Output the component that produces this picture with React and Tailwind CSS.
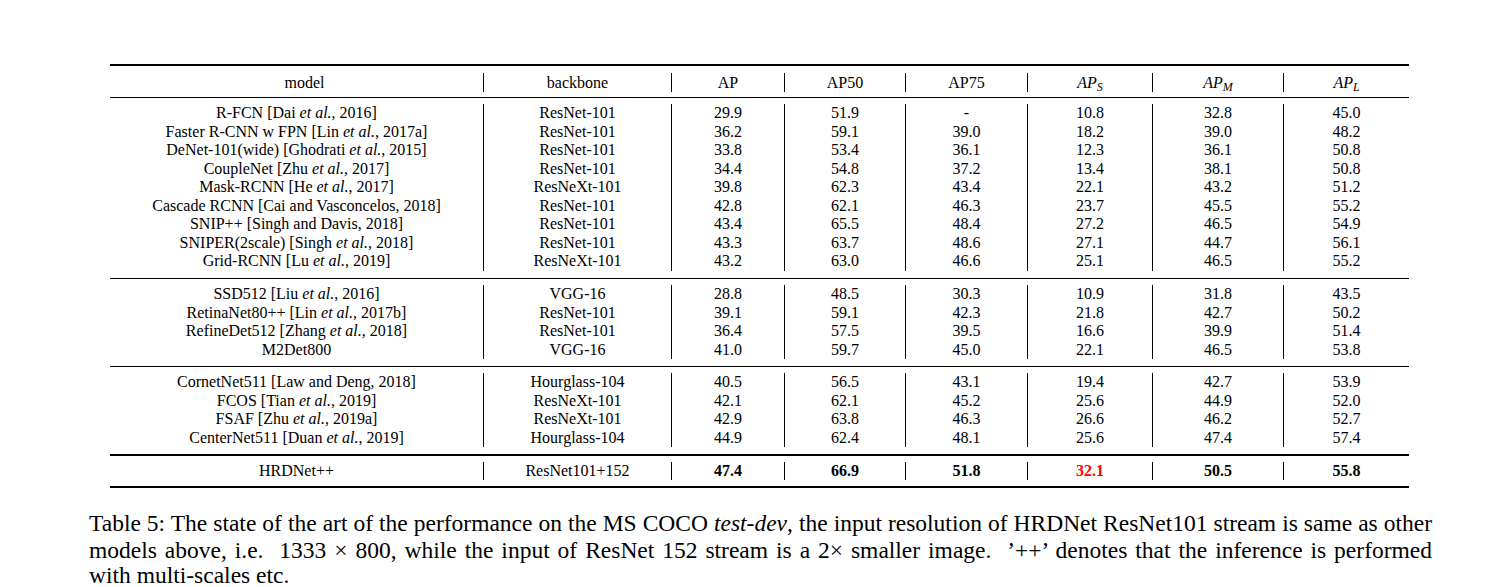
import React from 'react'

const grid = 'grid grid-cols-[373px_188px_113px_121px_122px_125px_131px_126px]'

const blocks = [
  [
    ['R-FCN [Dai et al., 2016]', 'ResNet-101', '29.9', '51.9', '-', '10.8', '32.8', '45.0'],
    ['Faster R-CNN w FPN [Lin et al., 2017a]', 'ResNet-101', '36.2', '59.1', '39.0', '18.2', '39.0', '48.2'],
    ['DeNet-101(wide) [Ghodrati et al., 2015]', 'ResNet-101', '33.8', '53.4', '36.1', '12.3', '36.1', '50.8'],
    ['CoupleNet [Zhu et al., 2017]', 'ResNet-101', '34.4', '54.8', '37.2', '13.4', '38.1', '50.8'],
    ['Mask-RCNN [He et al., 2017]', 'ResNeXt-101', '39.8', '62.3', '43.4', '22.1', '43.2', '51.2'],
    ['Cascade RCNN [Cai and Vasconcelos, 2018]', 'ResNet-101', '42.8', '62.1', '46.3', '23.7', '45.5', '55.2'],
    ['SNIP++ [Singh and Davis, 2018]', 'ResNet-101', '43.4', '65.5', '48.4', '27.2', '46.5', '54.9'],
    ['SNIPER(2scale) [Singh et al., 2018]', 'ResNet-101', '43.3', '63.7', '48.6', '27.1', '44.7', '56.1'],
    ['Grid-RCNN [Lu et al., 2019]', 'ResNeXt-101', '43.2', '63.0', '46.6', '25.1', '46.5', '55.2'],
  ],
  [
    ['SSD512 [Liu et al., 2016]', 'VGG-16', '28.8', '48.5', '30.3', '10.9', '31.8', '43.5'],
    ['RetinaNet80++ [Lin et al., 2017b]', 'ResNet-101', '39.1', '59.1', '42.3', '21.8', '42.7', '50.2'],
    ['RefineDet512 [Zhang et al., 2018]', 'ResNet-101', '36.4', '57.5', '39.5', '16.6', '39.9', '51.4'],
    ['M2Det800', 'VGG-16', '41.0', '59.7', '45.0', '22.1', '46.5', '53.8'],
  ],
  [
    ['CornetNet511 [Law and Deng, 2018]', 'Hourglass-104', '40.5', '56.5', '43.1', '19.4', '42.7', '53.9'],
    ['FCOS [Tian et al., 2019]', 'ResNeXt-101', '42.1', '62.1', '45.2', '25.6', '44.9', '52.0'],
    ['FSAF [Zhu et al., 2019a]', 'ResNeXt-101', '42.9', '63.8', '46.3', '26.6', '46.2', '52.7'],
    ['CenterNet511 [Duan et al., 2019]', 'Hourglass-104', '44.9', '62.4', '48.1', '25.6', '47.4', '57.4'],
  ],
]

const ours = ['HRDNet++', 'ResNet101+152', '47.4', '66.9', '51.8', '32.1', '50.5', '55.8']

// italicise "et al." inside citations
function Model({ text }) {
  const i = text.indexOf('et al.')
  if (i < 0) return text
  return (
    <>
      {text.slice(0, i)}
      <i>et al.</i>
      {text.slice(i + 6)}
    </>
  )
}

function MathAP({ sub }) {
  return (
    <span className="italic">
      AP<sub className="italic text-[12px]">{sub}</sub>
    </span>
  )
}

const header = [
  'model',
  'backbone',
  'AP',
  'AP50',
  'AP75',
  <MathAP sub="S" />,
  <MathAP sub="M" />,
  <MathAP sub="L" />,
]

function Block({ rows, pad, renderCell }) {
  return (
    <div className={`${grid} ${pad}`}>
      {header.map((_, c) => (
        <div key={c} className={c > 0 ? 'border-l border-black' : ''}>
          {rows.map((r, i) => (
            <div key={i} className="h-[18.5px] leading-[18.5px] text-center whitespace-nowrap">
              {renderCell(r, c)}
            </div>
          ))}
        </div>
      ))}
    </div>
  )
}

const modelCell = (r, c) => (c === 0 ? <Model text={r[0]} /> : r[c])

export default function App() {
  return (
    <div className="w-[1499px] h-[587px] overflow-hidden bg-white text-black font-['Liberation_Serif',serif]">
      <div className="pt-[64px] pl-[110px] w-[1409px] text-[16px]">
        <div className="h-[2px] bg-black" />
        <div className={`${grid} pt-[7px] pb-[5px]`}>
          {header.map((h, c) => (
            <div
              key={c}
              className={`h-[19px] leading-[19px] text-center ${c > 0 ? 'border-l border-black' : 'pl-[16px]'}`}
            >
              {h}
            </div>
          ))}
        </div>
        <div className="h-px bg-black" />
        <Block rows={blocks[0]} pad="pt-[6px] pb-[7.5px]" renderCell={modelCell} />
        <div className="h-px bg-black" />
        <Block rows={blocks[1]} pad="pt-[6px] pb-[7px]" renderCell={modelCell} />
        <div className="h-px bg-black" />
        <Block rows={blocks[2]} pad="pt-[6px] pb-[7px]" renderCell={modelCell} />
        <div className="h-[1.5px] bg-black" />
        <Block
          rows={[ours]}
          pad="pt-[6px] pb-[6px]"
          renderCell={(r, c) =>
            c < 2 ? r[c] : (
              <span className={`font-bold ${c === 5 ? 'text-[#ff0000]' : ''}`}>{r[c]}</span>
            )
          }
        />
        <div className="h-[2px] bg-black" />
      </div>

      {/* Caption */}
      <div className="mt-[22px] ml-[89px] w-[1343px] text-[23.5px] leading-[26.5px]">
        <div className="text-justify [text-align-last:justify] whitespace-nowrap">
          Table 5: The state of the art of the performance on the MS COCO <i>test-dev</i>, the input
          resolution of HRDNet ResNet101 stream is same as other
        </div>
        <div className="text-justify [text-align-last:justify] whitespace-nowrap">
          models above, i.e.&nbsp; 1333 × 800, while the input of ResNet 152 stream is a 2× smaller
          image.&nbsp; ’++’ denotes that the inference is performed
        </div>
        <div className="h-[22px] leading-[22px] pt-[1px]">with multi-scales etc.</div>
      </div>
    </div>
  )
}
